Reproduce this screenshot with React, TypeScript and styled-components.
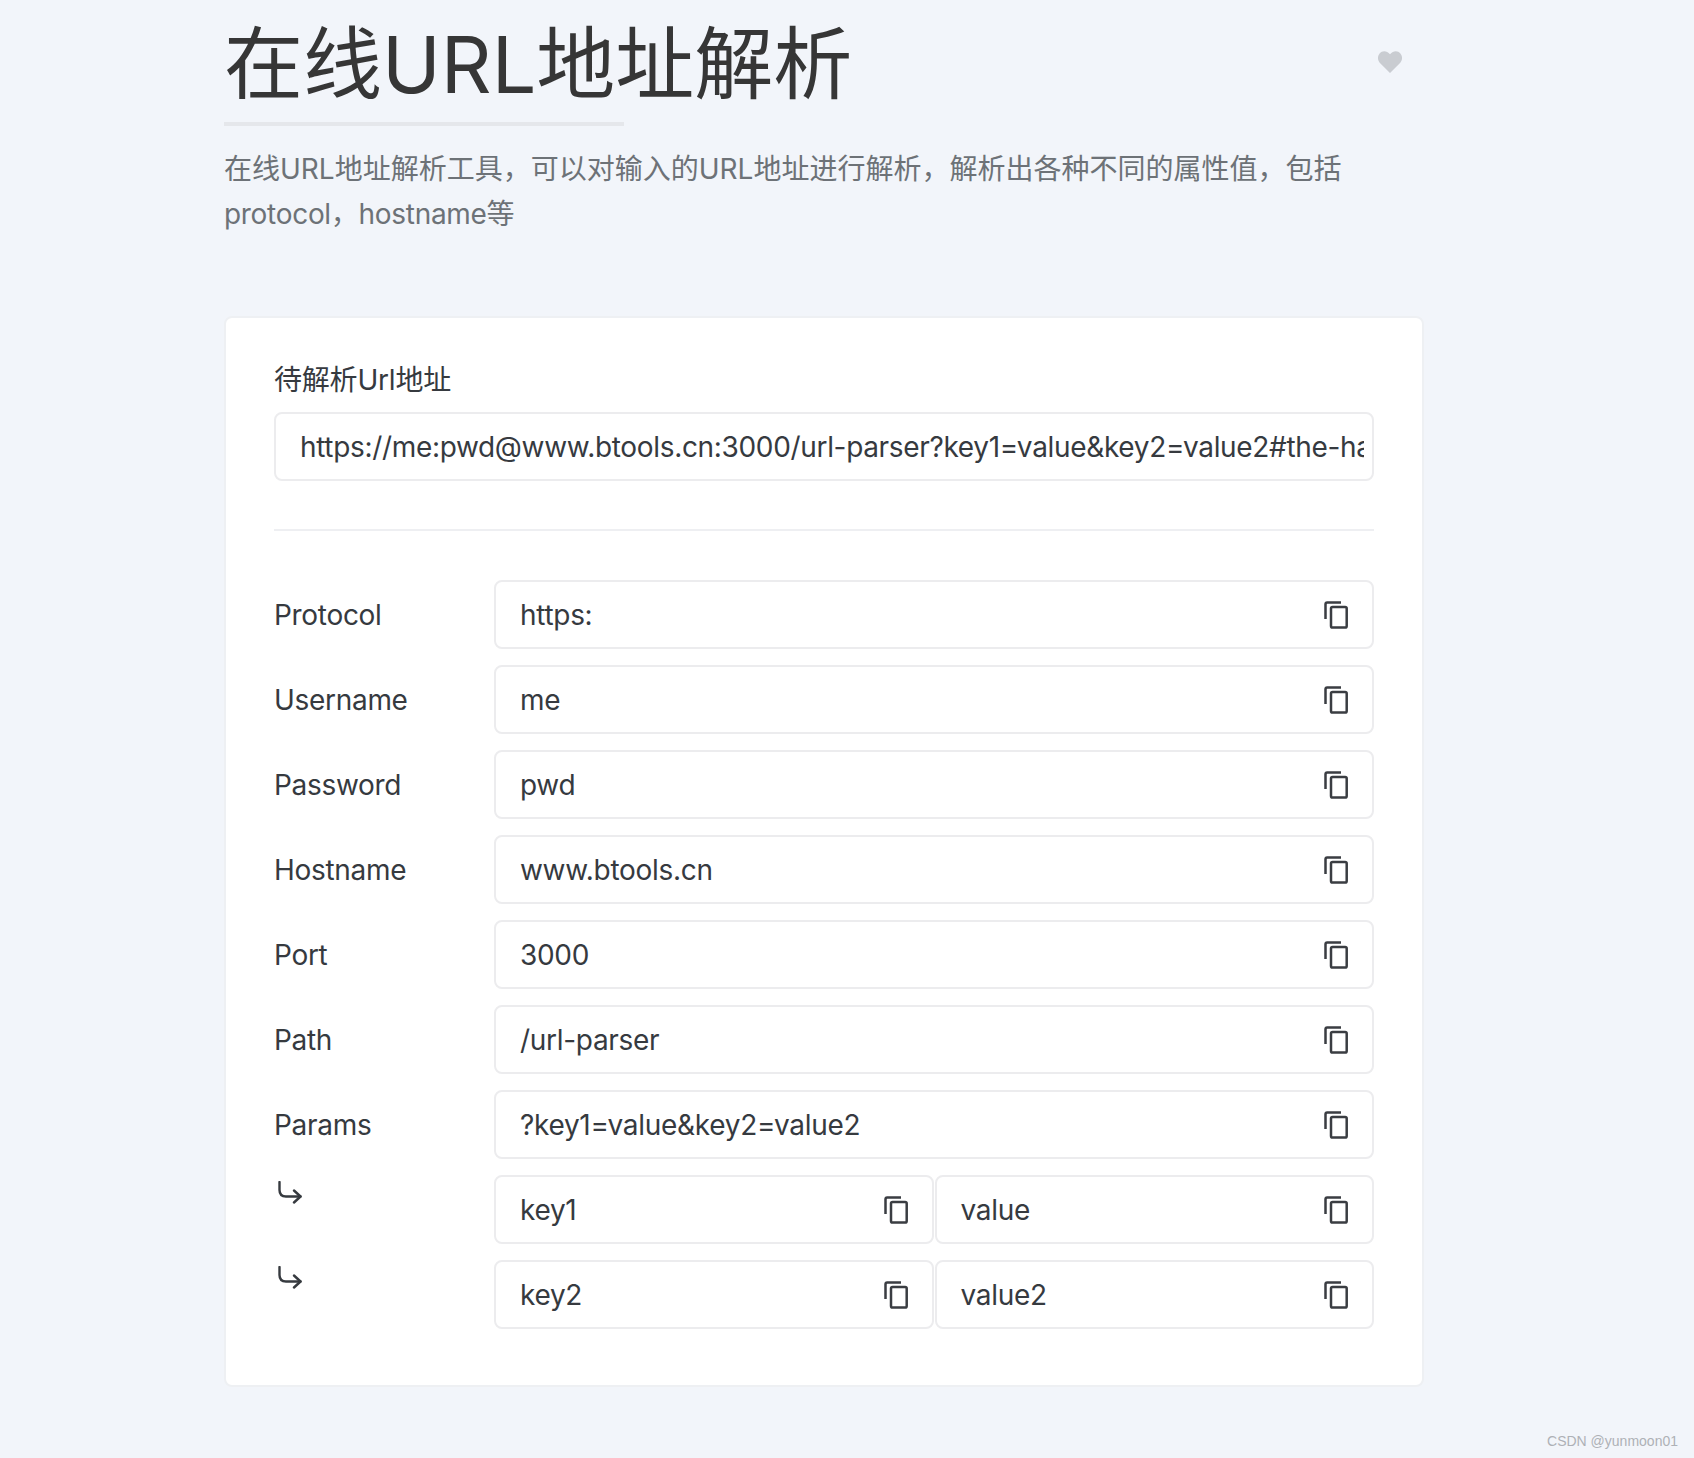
import React from "react";
import styled, { createGlobalStyle } from "styled-components";

const GlobalStyle = createGlobalStyle`
  html, body {
    margin: 0;
    padding: 0;
    background: #f2f5fa;
  }

  body {
    font-family: Inter, "Noto Sans CJK SC", sans-serif;
    color: #363a3f;
    -webkit-font-smoothing: antialiased;
  }
`;

const Page = styled.main`
  position: relative;
  box-sizing: border-box;
  height: 1458px;
  padding: 0 270px 0 224px;
  overflow: hidden;
`;

const Header = styled.header`
  display: flex;
  justify-content: space-between;
  align-items: flex-start;
  height: 316px;
`;

const HeaderText = styled.div`
  width: 1130px;
`;

const Title = styled.h1`
  margin: 0;
  height: 122px;
  font-size: 79px;
  line-height: 128px;
  font-weight: 400;
  color: #363636;
  white-space: nowrap;
`;

const TitleRule = styled.div`
  width: 400px;
  height: 4px;
  background: #e5e7eb;
`;

const Description = styled.p`
  margin: 21px 0 0;
  font-size: 28px;
  line-height: 45px;
  color: #6d7277;
`;

const Tight = styled.span`
  letter-spacing: -0.3px;
`;

const FavoriteIcon = styled.svg`
  flex: none;
  width: 24px;
  height: 22px;
  margin: 51px 22px 0 0;
  fill: #c9ccd1;
`;

const Card = styled.section`
  box-sizing: border-box;
  width: 1200px;
  height: 1071px;
  padding: 48px 48px 0;
  background: #fff;
  border: 2px solid #eef0f3;
  border-radius: 8px;
`;

const SourceLabel = styled.label`
  display: block;
  height: 46px;
  font-size: 28px;
  line-height: 28px;
  letter-spacing: -0.2px;
  color: #363a3f;
`;

const SourceInput = styled.input`
  display: block;
  box-sizing: border-box;
  width: 100%;
  height: 69px;
  padding: 0 8px 0 24px;
  background: #fff;
  border: 2px solid #ececee;
  border-radius: 8px;
  font: inherit;
  font-size: 28px;
  letter-spacing: -0.33px;
  color: #363a3f;
  outline: none;
`;

const Divider = styled.hr`
  height: 2px;
  margin: 48px 0 49px;
  background: #eeeff2;
  border: 0;
`;

const Rows = styled.div`
  display: flex;
  flex-direction: column;
  gap: 16px;
`;

const Row = styled.div`
  display: flex;
  align-items: center;
`;

const RowLabel = styled.div`
  flex: none;
  width: 220px;
  font-size: 28px;
  letter-spacing: -0.3px;
  color: #363a3f;
`;

const ArrowCell = styled.div`
  flex: none;
  align-self: flex-start;
  width: 220px;
  padding: 6px 0 0 4px;
  box-sizing: border-box;
`;

const ArrowIcon = styled.svg`
  display: block;
  width: 24px;
  height: 25px;
  fill: none;
  stroke: #363a3f;
  stroke-width: 2.4;
  stroke-linecap: round;
  stroke-linejoin: round;
`;

const Fields = styled.div`
  display: flex;
  flex: 1;
  gap: 1px;
  min-width: 0;
`;

const Field = styled.div`
  display: flex;
  flex: 1;
  align-items: center;
  justify-content: space-between;
  box-sizing: border-box;
  height: 69px;
  padding: 0 24px;
  background: #fff;
  border: 2px solid #ececee;
  border-radius: 8px;
  font-size: 28px;
  letter-spacing: -0.3px;
  color: #363a3f;
`;

const CopyIcon = styled.svg`
  flex: none;
  width: 24px;
  height: 28px;
  fill: none;
  stroke: #3a3d42;
  stroke-width: 2.5;
`;

const Watermark = styled.div`
  position: absolute;
  right: 16px;
  bottom: 9px;
  font-family: "Liberation Sans", sans-serif;
  font-size: 14px;
  line-height: 16px;
  color: #aeb1b6;
`;

const Copy = () => (
  <CopyIcon viewBox="0 0 24 28">
    <path d="M1.5 18V3.2c0-1 .7-1.700 1.700-1.700H17" />
    <rect x="7" y="6" width="15.700" height="20.500" rx="1.600" />
  </CopyIcon>
);

const Arrow = () => (
  <ArrowIcon viewBox="0 0 24 25">
    <path d="M1.500 1v8c0 4 2.500 6.500 6.500 6.500h14.500" />
    <path d="M16 9.500l6.500 6-6.500 6" />
  </ArrowIcon>
);

const simpleRows = [
  { label: "Protocol", value: "https:" },
  { label: "Username", value: "me" },
  { label: "Password", value: "pwd" },
  { label: "Hostname", value: "www.btools.cn" },
  { label: "Port", value: "3000" },
  { label: "Path", value: "/url-parser" },
  { label: "Params", value: "?key1=value&key2=value2" },
];

const paramRows = [
  { key: "key1", value: "value" },
  { key: "key2", value: "value2" },
];

export default function App() {
  return (
    <>
      <GlobalStyle />
      <Page>
        <Header>
          <HeaderText>
            <Title>在线URL地址解析</Title>
            <TitleRule />
            <Description>
              在线URL地址解析工具，可以对输入的URL地址进行解析，解析出各种不同的属性值，包括
              <Tight>protocol，hostname</Tight>等
            </Description>
          </HeaderText>
          <FavoriteIcon viewBox="0 0 24 22">
            <path d="M12 22 2.200 12.200C-.700 9.300-.700 5 1.600 2.400 4.300-.6 8.800-.5 12 3.200 15.200-.5 19.700-.6 22.400 2.400c2.300 2.600 2.300 6.900-.6 9.800Z" />
          </FavoriteIcon>
        </Header>
        <Card>
          <SourceLabel htmlFor="source-url">待解析Url地址</SourceLabel>
          <SourceInput
            id="source-url"
            readOnly
            value="https://me:pwd@www.btools.cn:3000/url-parser?key1=value&key2=value2#the-hash"
          />
          <Divider />
          <Rows>
            {simpleRows.map((row) => (
              <Row key={row.label}>
                <RowLabel>{row.label}</RowLabel>
                <Fields>
                  <Field>
                    {row.value}
                    <Copy />
                  </Field>
                </Fields>
              </Row>
            ))}
            {paramRows.map((row) => (
              <Row key={row.key}>
                <ArrowCell>
                  <Arrow />
                </ArrowCell>
                <Fields>
                  <Field>
                    {row.key}
                    <Copy />
                  </Field>
                  <Field>
                    {row.value}
                    <Copy />
                  </Field>
                </Fields>
              </Row>
            ))}
          </Rows>
        </Card>
        <Watermark>CSDN @yunmoon01</Watermark>
      </Page>
    </>
  );
}
